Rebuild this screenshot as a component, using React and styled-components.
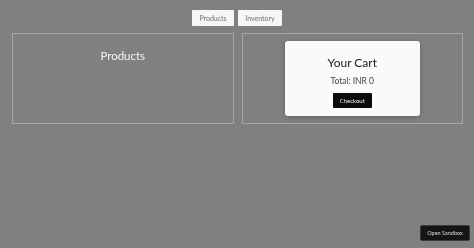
import React from "react";
import styled, { createGlobalStyle } from "styled-components";

const GlobalStyle = createGlobalStyle`
  html, body {
    margin: 0;
    padding: 0;
    background: #808080;
    font-family: "Lato", "Noto Sans", sans-serif;
    -webkit-font-smoothing: antialiased;
  }
`;

const Page = styled.div`
  width: 474px;
  height: 248px;
  position: relative;
  overflow: hidden;
  background: #808080;
  will-change: transform;
`;

const Nav = styled.nav`
  display: flex;
  justify-content: center;
  gap: 4px;
  padding-top: 10px;
`;

const NavButton = styled.button`
  width: ${(p) => p.w}px;
  height: 16px;
  padding: 0;
  border: none;
  border-radius: 1px;
  background: #f6f6f6;
  color: #707070;
  font-family: inherit;
  font-size: 7px;
  font-weight: 400;
`;

const Panels = styled.div`
  display: flex;
  gap: 8px;
  padding: 7px 11px 0 12px;
`;

const Panel = styled.section`
  flex: 1;
  height: 89px;
  border: 1px solid #a6a6a6;
  display: flex;
  flex-direction: column;
  align-items: center;
`;

const PanelTitle = styled.h2`
  margin: 15px 0 0;
  font-size: 11.5px;
  font-weight: 400;
  color: #f4f4f4;
`;

const Card = styled.div`
  margin-top: 7px;
  width: 135px;
  height: 75px;
  background: #fafafa;
  border-radius: 3px;
  box-shadow: 0 1px 4px rgba(0, 0, 0, 0.25);
  display: flex;
  flex-direction: column;
  align-items: center;
`;

const CartTitle = styled.h3`
  margin: 15px 0 0;
  font-size: 12px;
  font-weight: 400;
  color: #1a1a1a;
  line-height: 14px;
`;

const Total = styled.p`
  margin: 6px 0 0;
  font-size: 8.5px;
  font-weight: 400;
  color: #444;
  line-height: 10px;
`;

const Checkout = styled.button`
  margin-top: 7px;
  width: 39px;
  height: 15px;
  padding: 0;
  border: none;
  border-radius: 1px;
  background: #0b0b0b;
  color: #f0f0f0;
  font-family: inherit;
  font-size: 6px;
`;

const Sandbox = styled.button`
  position: absolute;
  right: 4px;
  bottom: 7px;
  width: 50px;
  height: 16px;
  padding: 0;
  border: 1px solid #3a3a3a;
  border-radius: 2px;
  background: #151515;
  color: #dcdcdc;
  font-family: inherit;
  font-size: 5.5px;
`;

export default function App() {
  return (
    <Page>
      <GlobalStyle />
      <Nav>
        <NavButton w={42}>Products</NavButton>
        <NavButton w={44}>Inventory</NavButton>
      </Nav>
      <Panels>
        <Panel>
          <PanelTitle>Products</PanelTitle>
        </Panel>
        <Panel>
          <Card>
            <CartTitle>Your Cart</CartTitle>
            <Total>Total: INR 0</Total>
            <Checkout>Checkout</Checkout>
          </Card>
        </Panel>
      </Panels>
      <Sandbox>Open Sandbox</Sandbox>
    </Page>
  );
}
